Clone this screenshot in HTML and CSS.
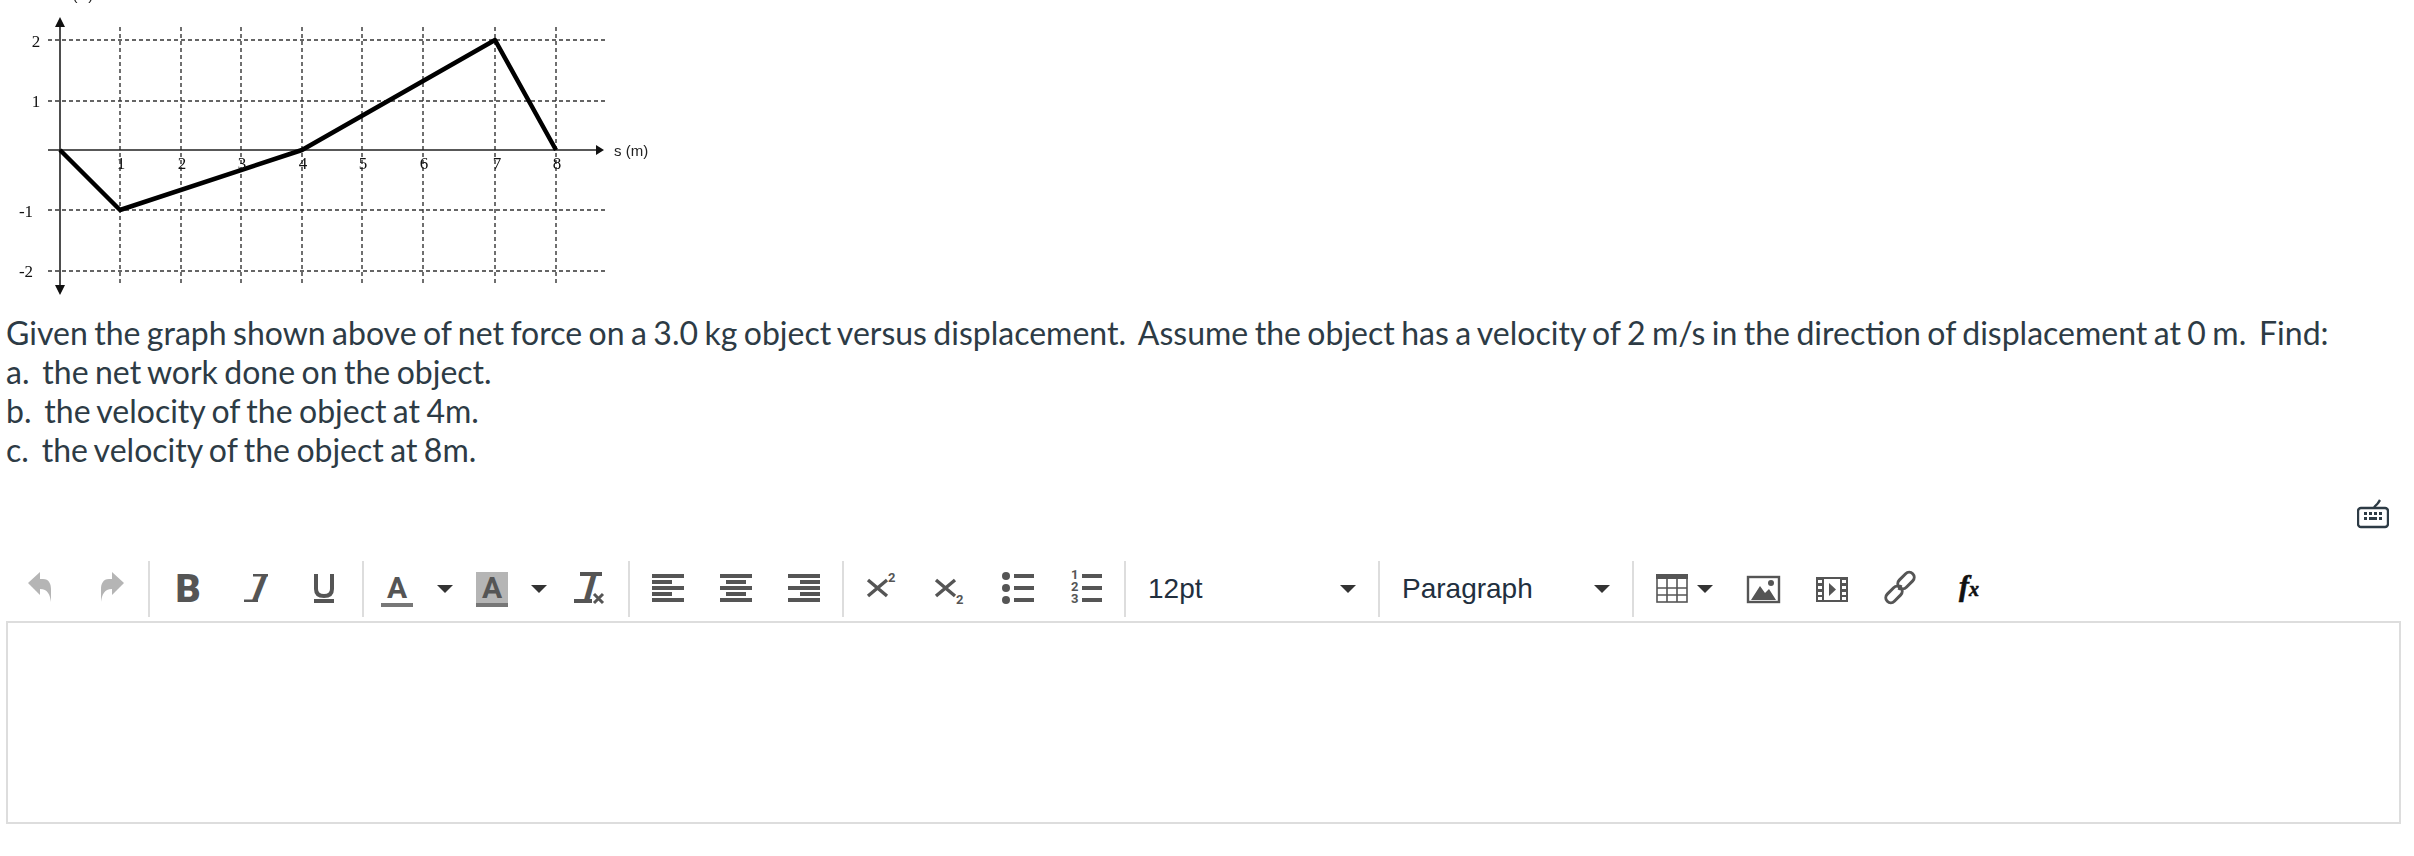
FILE: index.html
```html
<!DOCTYPE html>
<html lang="en">

<head>
    <meta charset="UTF-8">
    <meta name="viewport" content="width=device-width, initial-scale=1.0">
    <title>Question</title>
    <link rel="stylesheet" href="styles.css">
</head>

<body>
    <!-- force vs displacement graph -->
    <svg class="graph" width="680" height="300" viewBox="0 0 680 300">
        <text class="graph-sans graph-title" x="22" y="0">Force (N)</text>

        <g class="grid">
            <path d="M120 27V283M181 27V283M241 27V283M302 27V283M362 27V283M423 27V283M495 27V283M556 27V283"/>
            <path d="M48 40H605M48 101H605M48 210H605M48 271H605"/>
        </g>

        <path class="axis" d="M60 22V288M48 150H596"/>
        <path class="arrow" d="M60 17L65 27H55ZM60 295L55 285H65ZM604 150L596 145V155Z"/>
        <path class="curve" d="M60 150L120 210L302 150L495 40L556 150"/>

        <g class="graph-serif">
            <text x="121" y="169">1</text>
            <text x="182" y="169">2</text>
            <text x="242" y="169">3</text>
            <text x="303" y="169">4</text>
            <text x="363" y="169">5</text>
            <text x="424" y="169">6</text>
            <text x="497" y="169">7</text>
            <text x="557" y="169">8</text>
            <text x="36" y="47">2</text>
            <text x="36" y="107">1</text>
            <text x="26" y="217">-1</text>
            <text x="26" y="277">-2</text>
        </g>
        <text class="graph-sans" x="614" y="156">s (m)</text>
    </svg>

    <div class="question">
        <p>Given the graph shown above of net force on a 3.0 kg object versus displacement.&nbsp; Assume the object has a velocity of 2 m/s in the direction of displacement at 0 m.&nbsp; Find:</p>
        <p>a.&nbsp; the net work done on the object.</p>
        <p>b.&nbsp; the velocity of the object at 4m.</p>
        <p>c.&nbsp; the velocity of the object at 8m.</p>
    </div>

    <div class="kb-row">
        <svg width="32" height="30" viewBox="0 0 32 30">
            <path class="kb-line" d="M17 9C18 6 20 6 21 4L23 1"/>
            <rect class="kb-line" x="1" y="9" width="30" height="19" rx="3"/>
            <path class="kb-keys" d="M7 13h3v3H7zM12 13h3v3h-3zM17 13h3v3h-3zM22 13h3v3h-3zM7 18h3v3H7zM12 18h8v3h-8zM22 18h3v3h-3z"/>
        </svg>
    </div>

    <!-- editor toolbar -->
    <div class="toolbar">
        <div class="group group-history">
            <div class="btn">
                <svg class="icon" viewBox="0 0 40 40"><path class="off" d="M8 14L20 3V10H23C29 10 31 15 31 20V33C30 26 28 20 20 20V26Z"/></svg>
            </div>
            <div class="btn">
                <svg class="icon" viewBox="0 0 40 40"><path class="off" d="M32 14L20 3V10H17C11 10 9 15 9 20V33C10 26 12 20 20 20V26Z"/></svg>
            </div>
        </div>

        <div class="group">
            <div class="btn">
                <svg class="icon" viewBox="0 0 40 40"><text class="glyph bold" x="20" y="33" text-anchor="middle">B</text></svg>
            </div>
            <div class="btn">
                <svg class="icon" viewBox="0 0 40 40"><text class="glyph italic" transform="translate(20 33) skewX(-11)" text-anchor="middle">I</text><path class="fill" d="M17 5H32V7.500H17ZM8 30.500H22V33H8Z"/></svg>
            </div>
            <div class="btn">
                <svg class="icon" viewBox="0 0 40 40"><path class="line" d="M12 5V20C12 25 15 27 20 27C25 27 28 25 28 20V5"/><rect class="fill" x="10" y="30" width="20" height="4"/></svg>
            </div>
        </div>

        <div class="group group-format">
            <div class="btn">
                <svg class="icon" viewBox="0 0 40 40"><text class="glyph letter" x="19" y="29" text-anchor="middle">A</text><rect class="under" x="3" y="34" width="32" height="4"/></svg>
            </div>
            <div class="btn-caret"><i class="caret"></i></div>
            <div class="btn">
                <svg class="icon" viewBox="0 0 40 40"><rect class="mark" x="4" y="3" width="32" height="31"/><text class="glyph letter" x="20" y="29" text-anchor="middle">A</text><rect class="under" x="4" y="34" width="32" height="4"/></svg>
            </div>
            <div class="btn-caret"><i class="caret"></i></div>
            <div class="btn">
                <svg class="icon" viewBox="0 0 40 40"><text class="glyph italic" transform="translate(22 33) skewX(-5)" text-anchor="middle">I</text><path class="fill" d="M14 3H36V7H14ZM8 30H26V34H8Z"/><path class="x-line" d="M28 25L37 34M37 25L28 34"/></svg>
            </div>
        </div>

        <div class="group">
            <div class="btn">
                <svg class="icon" viewBox="0 0 40 40"><path class="fill" d="M4 5H36V9H4ZM4 11H24V15H4ZM4 17H36V21H4ZM4 23H24V27H4ZM4 29H36V33H4Z"/></svg>
            </div>
            <div class="btn">
                <svg class="icon" viewBox="0 0 40 40"><path class="fill" d="M4 5H36V9H4ZM10 11H30V15H10ZM4 17H36V21H4ZM10 23H30V27H10ZM4 29H36V33H4Z"/></svg>
            </div>
            <div class="btn">
                <svg class="icon" viewBox="0 0 40 40"><path class="fill" d="M4 5H36V9H4ZM16 11H36V15H16ZM4 17H36V21H4ZM16 23H36V27H16ZM4 29H36V33H4Z"/></svg>
            </div>
        </div>

        <div class="group">
            <div class="btn">
                <svg class="icon" viewBox="0 0 40 40"><path class="x-big" d="M6 11L25 27M25 11L6 27"/><text class="glyph tiny" x="26" y="13">2</text></svg>
            </div>
            <div class="btn">
                <svg class="icon" viewBox="0 0 40 40"><path class="x-big" d="M6 11L25 27M25 11L6 27"/><text class="glyph tiny" x="26" y="35">2</text></svg>
            </div>
            <div class="btn">
                <svg class="icon" viewBox="0 0 40 40"><circle class="fill" cx="8" cy="7" r="4"/><circle class="fill" cx="8" cy="19" r="4"/><circle class="fill" cx="8" cy="31" r="4"/><path class="fill" d="M16 5H36V9H16ZM16 17H36V21H16ZM16 29H36V33H16Z"/></svg>
            </div>
            <div class="btn">
                <svg class="icon" viewBox="0 0 40 40"><text class="glyph tiny" x="5" y="10">1</text><text class="glyph tiny" x="5" y="22">2</text><text class="glyph tiny" x="5" y="34">3</text><path class="fill" d="M16 5H36V9H16ZM16 17H36V21H16ZM16 29H36V33H16Z"/></svg>
            </div>
        </div>

        <div class="group select"><span>12pt</span><i class="caret"></i></div>
        <div class="group select"><span>Paragraph</span><i class="caret"></i></div>

        <div class="group group-last">
            <div class="btn btn-table">
                <svg width="34" height="40" viewBox="0 0 34 40"><rect class="stroke" x="2" y="6" width="30" height="27"/><rect class="fill" x="1" y="5" width="32" height="5"/><path class="stroke" d="M12 6V33M22 6V33M2 19H32M2 26H32"/></svg>
                <i class="caret"></i>
            </div>
            <div class="btn">
                <svg class="icon" viewBox="0 0 40 40"><rect class="stroke-2" x="4" y="8" width="31" height="25"/><path class="fill" d="M7 31L16 17L21 24L25 20L32 31Z"/><circle class="fill" cx="27" cy="14" r="3"/></svg>
            </div>
            <div class="btn">
                <svg class="icon" viewBox="0 0 40 40"><path class="fill" d="M4 8H36V33H4ZM6 11V14H10V11ZM6 17V20H10V17ZM6 23V26H10V23ZM6 28V31H10V28ZM30 11V14H34V11ZM30 17V20H34V17ZM30 23V26H34V23ZM30 28V31H34V28ZM12 10V31H28V10Z" fill-rule="evenodd"/><path class="fill" d="M17 14L24 20.500L17 27Z"/></svg>
            </div>
            <div class="btn">
                <svg class="icon" viewBox="0 0 40 40"><g class="link"><rect x="21" y="2" width="10" height="19" rx="5" transform="rotate(45 26 11.500)"/><rect x="9" y="16" width="10" height="19" rx="5" transform="rotate(45 14 25.500)"/><path d="M21 16L19 21"/></g></svg>
            </div>
            <div class="btn">
                <svg class="icon" viewBox="0 0 40 40"><text class="fx" x="11" y="27">f<tspan class="fx-small">x</tspan></text></svg>
            </div>
        </div>
    </div>

    <div class="editor"></div>
</body>

</html>
```

FILE: styles.css
```css
body {
    margin: 0;
    padding: 0 13px 0 6px;
    background: #fff;
    color: #2d3b45;
    font-family: Lato, sans-serif;
}

p {
    margin: 0;
}

/* graph */
.graph {
    display: block;
    margin-left: -6px;
    filter: blur(0.3px);
}

.grid path {
    fill: none;
    stroke: #333;
    stroke-width: 1.4;
    stroke-dasharray: 4 3;
}

.axis {
    fill: none;
    stroke: #222;
    stroke-width: 1.6;
}

.arrow {
    fill: #111;
}

.curve {
    fill: none;
    stroke: #000;
    stroke-width: 4.5;
    stroke-linejoin: round;
}

.graph-serif {
    fill: #111;
    font-family: "Liberation Serif", serif;
    font-size: 17px;
    text-anchor: middle;
}

.graph-sans {
    fill: #222;
    font-family: "Liberation Sans", sans-serif;
    font-size: 15px;
}

.graph-title {
    word-spacing: 8px;
}

/* question text */
.question {
    margin-top: 13px;
    font-size: 32px;
    line-height: 39px;
    word-spacing: -1.75px;
    white-space: nowrap;
}

.kb-row {
    display: flex;
    justify-content: flex-end;
    margin-top: 30px;
    padding-right: 12px;
}

.kb-row svg {
    display: block;
}

.kb-line {
    fill: none;
    stroke: #2d3b45;
    stroke-width: 2.4;
}

.kb-keys {
    fill: #2d3b45;
}

/* toolbar */
.toolbar {
    display: flex;
    height: 56px;
    margin-top: 32px;
}

.group {
    display: flex;
    flex: none;
    box-sizing: border-box;
    padding: 0 4px;
    border-right: 2px solid #ddd;
}

.group-history {
    gap: 4px;
    padding: 0 2px 0 0;
}

.group-format {
    padding: 0 8px 0 0;
}

.group-last {
    border-right: 0;
}

.btn {
    display: flex;
    flex: none;
    align-items: center;
    justify-content: center;
    width: 68px;
}

.btn-caret {
    display: flex;
    flex: none;
    align-items: center;
    justify-content: center;
    width: 26px;
}

.btn-table {
    gap: 8px;
    width: 92px;
}

.icon {
    display: block;
    flex: none;
    width: 40px;
    height: 40px;
    overflow: visible;
}

.caret {
    display: block;
    flex: none;
    width: 0;
    height: 0;
    border-top: 8px solid #333;
    border-left: 8px solid transparent;
    border-right: 8px solid transparent;
}

.select {
    align-items: center;
    justify-content: space-between;
    width: 254px;
    padding: 0 22px;
    color: #222f3e;
    font-family: "Liberation Sans", sans-serif;
    font-size: 28px;
}

.off {
    fill: #b5b5b5;
}

.fill {
    fill: #555;
}

.under {
    fill: #777;
}

.mark {
    fill: #b5b5b5;
}

.line {
    fill: none;
    stroke: #555;
    stroke-width: 4;
}

.stroke {
    fill: none;
    stroke: #555;
    stroke-width: 1.6;
}

.stroke-2 {
    fill: none;
    stroke: #555;
    stroke-width: 2.4;
}

.link {
    fill: none;
    stroke: #555;
    stroke-width: 3;
}

.x-line {
    fill: none;
    stroke: #555;
    stroke-width: 3;
}

.x-big {
    fill: none;
    stroke: #555;
    stroke-width: 3.4;
}

.glyph {
    fill: #555;
    font-family: Roboto, sans-serif;
}

.bold {
    font-size: 39px;
    font-weight: 900;
}

.italic {
    font-family: "Liberation Sans", sans-serif;
    font-size: 38px;
    font-style: italic;
    font-weight: 700;
}

.letter {
    font-size: 30px;
    font-weight: 700;
}

.tiny {
    font-size: 13px;
    font-weight: 700;
}

.fx {
    fill: #111;
    stroke: #111;
    stroke-width: 0.6;
    font-family: "Liberation Serif", serif;
    font-size: 30px;
    font-style: italic;
    font-weight: 700;
}

.fx-small {
    font-size: 20px;
}

.editor {
    box-sizing: border-box;
    height: 203px;
    margin-top: 4px;
    border: 2px solid #ddd;
}
```
